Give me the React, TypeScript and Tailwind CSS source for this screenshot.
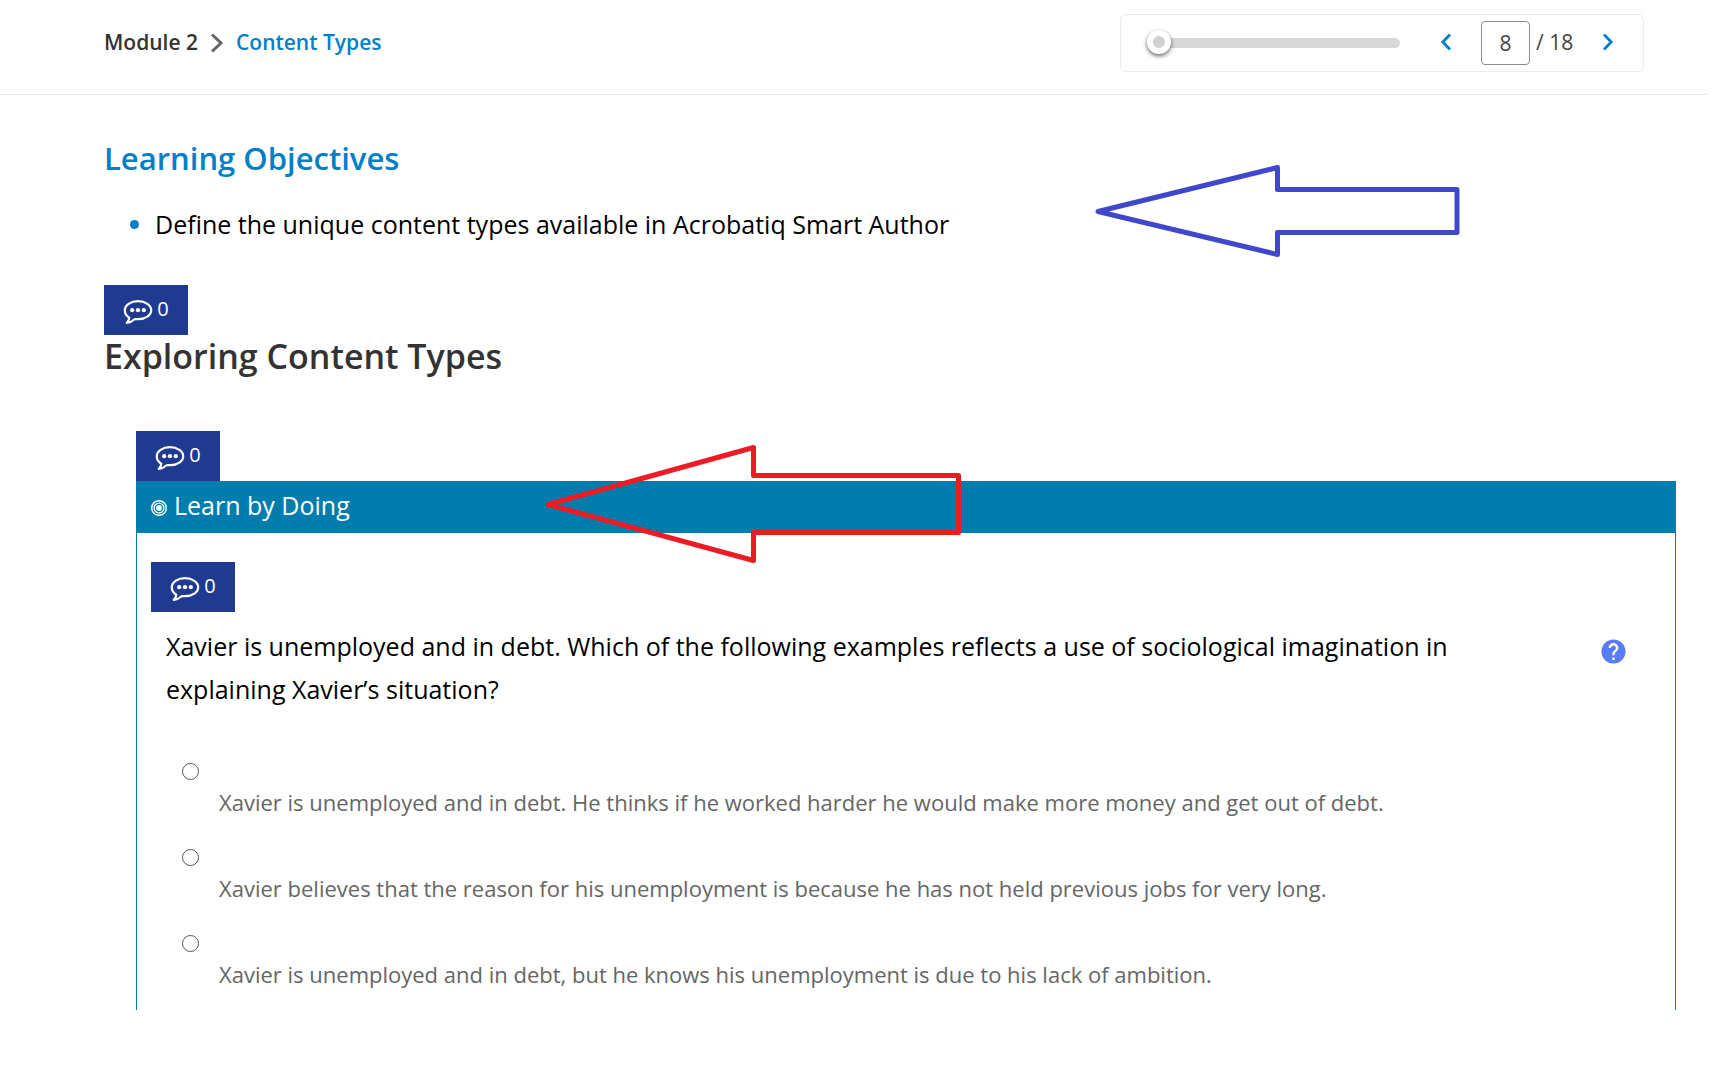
import { useState } from "react";
import { MdHelp } from "react-icons/md";

const OPTIONS = [
  "Xavier is unemployed and in debt. He thinks if he worked harder he would make more money and get out of debt.",
  "Xavier believes that the reason for his unemployment is because he has not held previous jobs for very long.",
  "Xavier is unemployed and in debt, but he knows his unemployment is due to his lack of ambition.",
];

const TOTAL_PAGES = 18;

/**
 * Comment counter button
 */
function CommentBadge({ count = 0 }: { count?: number }) {
  return (
    <button
      type="button"
      aria-label={`${count} comments`}
      className="flex h-[50px] w-[84px] items-center justify-center gap-1 bg-[#203a90] pb-[2px] text-white"
    >
      <svg viewBox="0 0 30 26" className="mt-[6px] h-[26px] w-[30px]" fill="none" aria-hidden="true">
        <path
          d="M15 2.2c7.4 0 13.2 4 13.2 9s-5.800 9-13.200 9c-1 0-2-.1-3-.2-2.200 2-4.800 3.400-8.200 3.900 1.500-1.400 2.300-3.100 2.500-5.200C3.500 17 1.800 14.300 1.800 11.200c0-5 5.800-9 13.200-9z"
          stroke="currentColor"
          strokeWidth="2.200"
          strokeLinejoin="round"
        />
        <circle cx="9.200" cy="11.200" r="2.100" fill="currentColor" />
        <circle cx="15" cy="11.200" r="2.100" fill="currentColor" />
        <circle cx="20.800" cy="11.200" r="2.100" fill="currentColor" />
      </svg>
      <span className="text-[20px] leading-6">{count}</span>
    </button>
  );
}

function TargetIcon() {
  return (
    <svg viewBox="0 0 16 16" className="mt-1 size-4 shrink-0" fill="none" stroke="currentColor" aria-hidden="true">
      <circle cx="8" cy="8" r="7.300" strokeWidth="1.400" />
      <circle cx="8" cy="8" r="4.900" strokeWidth="1.300" />
      <circle cx="8" cy="8" r="2.900" fill="currentColor" stroke="none" />
    </svg>
  );
}

/**
 * Slider, page number box and previous / next buttons
 */
function Pager() {
  const [page, setPage] = useState(8);
  const [position, setPosition] = useState(0);

  return (
    <div className="flex h-[58px] w-[524px] items-center rounded-md border border-[#ececec] pl-[26px]">
      <input
        type="range"
        aria-label="Page slider"
        min={0}
        max={100}
        value={position}
        onChange={(e) => setPosition(Number(e.target.value))}
        className="h-6 w-[253px] appearance-none bg-transparent [&::-webkit-slider-runnable-track]:h-[10px] [&::-webkit-slider-runnable-track]:rounded-full [&::-webkit-slider-runnable-track]:bg-[#d8d8d8] [&::-webkit-slider-thumb]:-mt-2 [&::-webkit-slider-thumb]:size-6 [&::-webkit-slider-thumb]:appearance-none [&::-webkit-slider-thumb]:rounded-full [&::-webkit-slider-thumb]:border-[6px] [&::-webkit-slider-thumb]:border-white [&::-webkit-slider-thumb]:bg-[#d0d0d0] [&::-webkit-slider-thumb]:shadow-[0_2px_4px_rgba(0,0,0,0.6)]"
      />
      <button
        type="button"
        aria-label="Previous page"
        onClick={() => setPage(Math.max(1, page - 1))}
        className="ml-10 pb-[2px] text-[#0080c9]"
      >
        <svg viewBox="0 0 12 18" className="h-[18px] w-3" fill="none" stroke="currentColor" strokeWidth="2.800" aria-hidden="true">
          <path d="M10 1.500 2.800 9l7.200 7.500" />
        </svg>
      </button>
      <input
        type="text"
        aria-label="Page number"
        value={page}
        onChange={(e) => setPage(Number(e.target.value) || 1)}
        className="ml-[29px] h-11 w-[49px] rounded border border-[#8c8c8c] text-center text-[21px] text-[#444]"
      />
      <span className="ml-[6px] text-[21px] text-[#444]">/ {TOTAL_PAGES}</span>
      <button
        type="button"
        aria-label="Next page"
        onClick={() => setPage(Math.min(TOTAL_PAGES, page + 1))}
        className="ml-[29px] pb-[2px] text-[#0080c9]"
      >
        <svg viewBox="0 0 12 18" className="h-[18px] w-3" fill="none" stroke="currentColor" strokeWidth="2.800" aria-hidden="true">
          <path d="M2 1.500 9.200 9 2 16.500" />
        </svg>
      </button>
    </div>
  );
}

function Header() {
  return (
    <header className="mr-[15px] flex h-[95px] items-start justify-between border-b border-[#e8e8e8] pt-[14px] pr-16 pl-[104px]">
      <nav aria-label="Breadcrumb" className="flex h-[58px] items-center text-[21px] font-semibold">
        <span className="text-[#333]">Module 2</span>
        <svg viewBox="0 0 14 20" className="mx-3 h-5 w-[14px]" fill="none" stroke="#666" strokeWidth="3" aria-hidden="true">
          <path d="M2 1.500 11 10l-9 8.500" />
        </svg>
        <a href="#content-types" className="text-[#0080c9]">
          Content Types
        </a>
      </nav>
      <Pager />
    </header>
  );
}

function Question() {
  const [selected, setSelected] = useState<number | null>(null);

  return (
    <div className="border-x border-[#007dad] px-[14px] pt-[29px] pb-5">
      <CommentBadge />
      <div className="mt-[13px] flex items-start justify-between pr-[33px] pl-[15px]">
        <p id="question" className="max-w-[1340px] text-[25px] leading-[43px] text-black">
          Xavier is unemployed and in debt. Which of the following examples reflects a use of sociological imagination in
          explaining Xavier’s situation?
        </p>
        <button type="button" aria-label="Help" className="mt-3 shrink-0 text-[#587cf7]">
          <MdHelp size={29} />
        </button>
      </div>
      <div role="radiogroup" aria-labelledby="question" className="mt-[43px] flex flex-col gap-[22px] pl-[31px]">
        {OPTIONS.map((option, i) => (
          <label key={option} className="flex items-start gap-5">
            <input
              type="radio"
              name="answer"
              checked={selected === i}
              onChange={() => setSelected(i)}
              className="mt-[9px] size-[17px] shrink-0 appearance-none rounded-full border border-[#555] checked:border-[5px]"
            />
            <span className="pt-8 text-[22px] leading-8 text-[#666]">{option}</span>
          </label>
        ))}
      </div>
    </div>
  );
}

export default function App() {
  return (
    <div className="min-h-screen bg-white font-['Open_Sans',sans-serif]">
      <Header />
      <main id="content-types" className="pt-[42px] pr-[47px] pl-[104px]">
        <section className="relative">
          <h2 className="text-[31px] leading-[42px] font-semibold text-[#0080c9]">Learning Objectives</h2>
          <ul className="mt-[23px] list-disc pl-[51px] marker:text-[#0080c9]">
            <li className="text-[25px] leading-[44px] text-black">
              Define the unique content types available in Acrobatiq Smart Author
            </li>
          </ul>
          <svg
            viewBox="0 0 366 94"
            className="absolute top-7 left-[990px] h-[94px] w-[366px]"
            fill="none"
            stroke="#3f48cc"
            strokeWidth="5"
            aria-hidden="true"
          >
            <path d="M4 46.500 183.500 2.500v22H363v43H183.500v22z" strokeLinejoin="round" />
          </svg>
        </section>

        <section className="mt-[39px]">
          <CommentBadge />
          <h1 className="text-[34px] leading-[42px] font-semibold text-[#333]">Exploring Content Types</h1>
        </section>

        <section className="relative mt-[54px] ml-8">
          <CommentBadge />
          <h2 className="flex h-[52px] items-center gap-[7px] bg-[#007dad] px-[15px] pb-[2px] text-[25px] text-white">
            <TargetIcon />
            Learn by Doing
          </h2>
          <Question />
          <svg
            viewBox="0 0 418 120"
            className="absolute top-[13px] left-[408px] h-[120px] w-[418px]"
            fill="none"
            stroke="#ed1c24"
            strokeWidth="5"
            aria-hidden="true"
          >
            <path d="M4 60.500 209.500 3.500v28H414.500v57H209.500v28z" strokeLinejoin="round" />
          </svg>
        </section>
      </main>
    </div>
  );
}
